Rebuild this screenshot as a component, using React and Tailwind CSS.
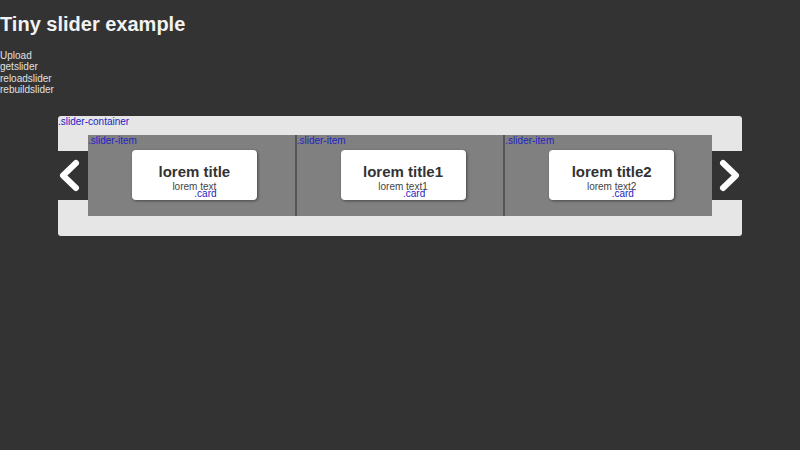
import React from 'react'

const items = [
  { title: 'lorem title', text: 'lorem text' },
  { title: 'lorem title1', text: 'lorem text1' },
  { title: 'lorem title2', text: 'lorem text2' },
]

function Chevron({ dir }) {
  const pts = dir === 'left' ? '18,12 5,24.5 18,37' : '11,12 24,24.5 11,37'
  return (
    <svg width="30" height="49" viewBox="0 0 30 49">
      <polyline points={pts} fill="none" stroke="#fff" strokeWidth="6" strokeLinecap="round" strokeLinejoin="round" />
    </svg>
  )
}

export default function App() {
  return (
    <div className="min-h-screen bg-[#333] text-[#eee] font-['Liberation_Sans',Arial,sans-serif] flow-root">
      <h1 className="text-[20px] leading-[23px] font-bold my-[13.4px] text-[#f2f2f2]">Tiny slider example</h1>
      <div className="flex flex-col text-[10px] leading-[11.5px] text-[#e0e0e0]">
        <a href="#">Upload</a>
        <a href="#">getslider</a>
        <a href="#">reloadslider</a>
        <a href="#">rebuildslider</a>
      </div>

      <div className="w-[684px] mx-auto mt-[20px] pb-[20px] bg-[#e6e6e6] rounded-[3px]">
        <div className="text-[10px] leading-[11.5px] text-[#2424c4] h-[11.5px]">.slider-container</div>
        <div className="flex items-center mt-[7.5px]">
          <button className="w-[30px] h-[49px] bg-[#333] flex items-center justify-center">
            <Chevron dir="left" />
          </button>
          <div className="flex h-[81px] w-[624px]">
            {items.map((it, i) => (
              <div
                key={i}
                className={
                  i < 2
                    ? 'relative flex-1 flex items-center justify-center pl-[6px] bg-[#808080] border-r-2 border-[#555]'
                    : 'relative flex-1 flex items-center justify-center pl-[6px] bg-[#808080]'
                }
              >
                <span className="absolute top-0 left-0 text-[10px] leading-[11.5px] text-[#2424c4]">.slider-item</span>
                <div className="relative w-[125px] h-[50px] bg-white rounded-[4px] shadow-[1px_1px_3px_rgba(0,0,0,0.45)] pt-[12.5px] text-center">
                  <div className="text-[15px] leading-[17px] font-bold text-[#333]">{it.title}</div>
                  <div className="mt-[1.5px] text-[10px] leading-[11.5px] text-[#444]">{it.text}</div>
                  <span className="absolute left-1/2 bottom-[0.5px] text-[10px] leading-[11.5px] text-[#2424c4]">.card</span>
                </div>
              </div>
            ))}
          </div>
          <button className="w-[30px] h-[49px] bg-[#333] flex items-center justify-center">
            <Chevron dir="right" />
          </button>
        </div>
      </div>
    </div>
  )
}
